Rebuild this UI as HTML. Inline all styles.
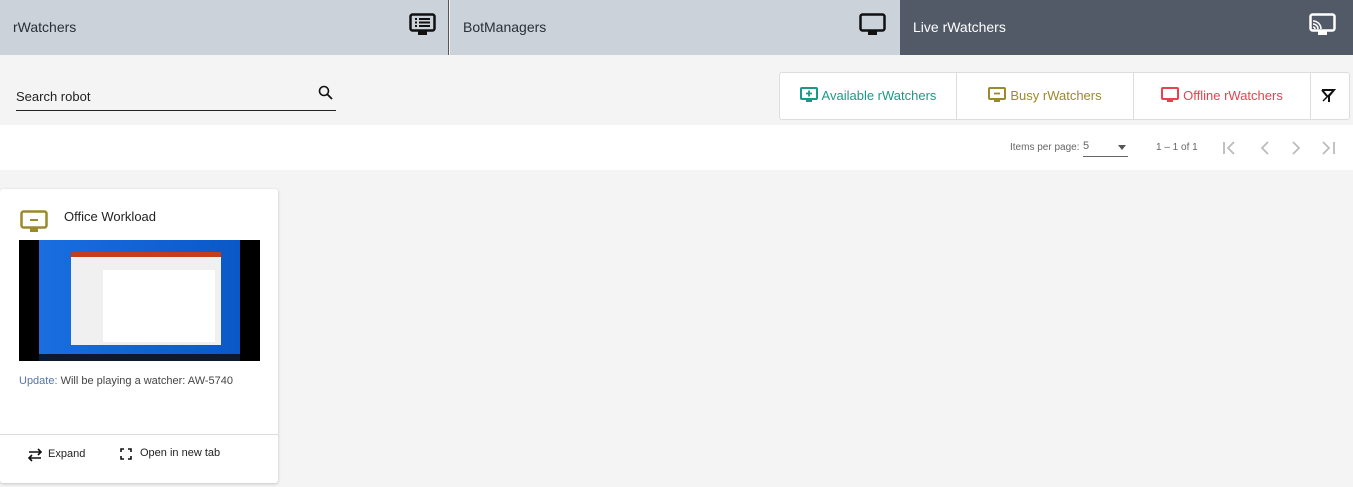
<!DOCTYPE html>
<html><head><style>
*{box-sizing:border-box;margin:0;padding:0}
body{width:1353px;height:487px;background:#f4f4f4;font-family:"Liberation Sans",sans-serif;position:relative;overflow:hidden;color:#222}
.a{position:absolute}
.tab{position:absolute;top:0;height:55px;background:#cbd2d9;font-size:14px;line-height:55px;color:#2a2f35}
.btn{position:absolute;top:0;height:46px;line-height:46px;font-size:13px;text-align:center;border-right:1px solid #ddd}
</style></head><body>
<div class="tab" style="left:0;width:449px;padding-left:13px;border-right:1px solid #555">rWatchers
<svg class="a" style="left:409px;top:13px" width="27" height="24" viewBox="0 0 27 24"><rect x="1.5" y="1.5" width="24" height="16" rx="2" fill="none" stroke="#111" stroke-width="2.5"/><rect x="9" y="18" width="9" height="4" fill="#111"/><path d="M6 6h2M10 6h11M6 9.5h2M10 9.5h11M6 13h2M10 13h11" stroke="#111" stroke-width="2"/></svg></div>
<div class="tab" style="left:450px;width:450px;padding-left:13px">BotManagers
<svg class="a" style="left:409px;top:13px" width="27" height="24" viewBox="0 0 27 24"><rect x="1.5" y="1.5" width="24" height="16" rx="2" fill="none" stroke="#111" stroke-width="2.5"/><rect x="9" y="18" width="9" height="4" fill="#111"/></svg></div>
<div class="tab" style="left:900px;width:453px;padding-left:13px;background:#515a66;color:#fff">Live rWatchers
<svg class="a" style="left:409px;top:13px" width="27" height="24" viewBox="0 0 27 24"><rect x="1.5" y="1.5" width="24" height="16" rx="2" fill="none" stroke="#fff" stroke-width="2.5"/><rect x="9" y="18" width="9" height="4" fill="#fff"/><path d="M4 8a8 8 0 0 1 8 8M4 11a5 5 0 0 1 5 5M4 14a2 2 0 0 1 2 2" fill="none" stroke="#fff" stroke-width="1.6"/></svg></div>

<div class="a" style="left:16px;top:89px;width:320px;height:22px;border-bottom:1.5px solid #222;font-size:13px">Search robot</div>
<svg class="a" style="left:318px;top:85px" width="16" height="16" viewBox="0 0 16 16"><circle cx="6" cy="6" r="4.5" fill="none" stroke="#111" stroke-width="1.6"/><path d="M9.5 9.5L14 14" stroke="#111" stroke-width="1.8"/></svg>

<div class="a" style="left:779px;top:72px;width:571px;height:48px;background:#fff;border:1px solid #ddd;border-radius:3px">
<div class="btn" style="left:0;width:177px;color:#1a9a86"><svg style="vertical-align:-3px;margin-right:4px" width="18" height="16" viewBox="0 0 18 16"><rect x="1" y="1" width="16" height="11" rx="1" fill="none" stroke="#1a9a86" stroke-width="2"/><rect x="6" y="12" width="6" height="3" fill="#1a9a86"/><path d="M9 3.5v6M6 6.5h6" stroke="#1a9a86" stroke-width="1.8"/></svg>Available rWatchers</div>
<div class="btn" style="left:177px;width:177px;color:#9a8a2c"><svg style="vertical-align:-3px;margin-right:4px" width="18" height="16" viewBox="0 0 18 16"><rect x="1" y="1" width="16" height="11" rx="1" fill="none" stroke="#9a8a2c" stroke-width="2"/><rect x="6" y="12" width="6" height="3" fill="#9a8a2c"/><path d="M6 6.5h6" stroke="#9a8a2c" stroke-width="1.8"/></svg>Busy rWatchers</div>
<div class="btn" style="left:354px;width:177px;color:#e8424f"><svg style="vertical-align:-3px;margin-right:4px" width="18" height="16" viewBox="0 0 18 16"><rect x="1" y="1" width="16" height="11" rx="1" fill="none" stroke="#e8424f" stroke-width="2"/><rect x="6" y="12" width="6" height="3" fill="#e8424f"/></svg>Offline rWatchers</div>
<svg class="a" style="left:540px;top:16px" width="16" height="14" viewBox="0 0 16 14"><path d="M2 1h12L9 7v6M7 7L2 1" fill="none" stroke="#111" stroke-width="2"/><path d="M3 12L13 2" stroke="#111" stroke-width="1.5"/></svg>
</div>

<div class="a" style="left:0;top:125px;width:1353px;height:45px;background:#fff;font-size:10px;color:#666">
<span class="a" style="left:1010px;top:17px">Items per page:</span>
<span class="a" style="left:1083px;top:15px;width:45px;height:17px;border-bottom:1px solid #666;font-size:11px">5<span style="position:absolute;right:2px;top:5px;border:4px solid transparent;border-top:5px solid #555"></span></span>
<span class="a" style="left:1156px;top:17px">1 – 1 of 1</span>
<svg class="a" style="left:1222px;top:15px" width="120" height="16" viewBox="0 0 120 16" fill="none" stroke="#bbb" stroke-width="1.8"><path d="M2 2v12M12 2L6 8l6 6M46 2l-6 6 6 6M71 2l6 6-6 6M101 2l6 6-6 6M112 2v12"/></svg>
</div>

<div class="a" style="left:0;top:189px;width:278px;height:294px;background:#fff;box-shadow:0 1px 3px rgba(0,0,0,.2);border-radius:3px">
<svg class="a" style="left:20px;top:21px" width="28" height="24" viewBox="0 0 28 24"><rect x="1.5" y="1.5" width="25" height="16" rx="2" fill="none" stroke="#9a8a2c" stroke-width="2.5"/><rect x="10" y="18" width="8" height="4" fill="#9a8a2c"/><path d="M10 10h8" stroke="#9a8a2c" stroke-width="2"/></svg>
<div class="a" style="left:64px;top:20px;font-size:13px">Office Workload</div>
<div class="a" style="left:19px;top:51px;width:241px;height:121px;background:#000">
<div class="a" style="left:20px;top:0;width:201px;height:121px;background:linear-gradient(90deg,#1a6ee0,#0a58c8)"></div>
<div class="a" style="left:52px;top:12px;width:150px;height:93px;background:#f0f0f0;border-top:5px solid #c43e1c"></div>
<div class="a" style="left:84px;top:30px;width:112px;height:72px;background:#fff"></div>
<div class="a" style="left:20px;top:114px;width:201px;height:7px;background:#0b1a30"></div>
</div>
<div class="a" style="left:19px;top:186px;font-size:11px;color:#444"><span style="color:#5575a8">Update:</span> Will be playing a watcher: AW-5740</div>
<div class="a" style="left:0;top:245px;width:278px;border-top:1px solid #ddd"></div>
<svg class="a" style="left:27px;top:259px" width="16" height="14" viewBox="0 0 16 14" fill="none" stroke="#111" stroke-width="1.6"><path d="M2 4h12M11 1l3 3-3 3M14 10H2M5 7l-3 3 3 3"/></svg>
<div class="a" style="left:48px;top:259px;font-size:11px">Expand</div>
<svg class="a" style="left:120px;top:259px" width="12" height="12" viewBox="0 0 12 12" fill="none" stroke="#111" stroke-width="1.6"><path d="M1 4V1h3M8 1h3v3M11 8v3H8M4 11H1V8"/></svg>
<div class="a" style="left:140px;top:258px;font-size:11px">Open in new tab</div>
</div>
</body></html>
